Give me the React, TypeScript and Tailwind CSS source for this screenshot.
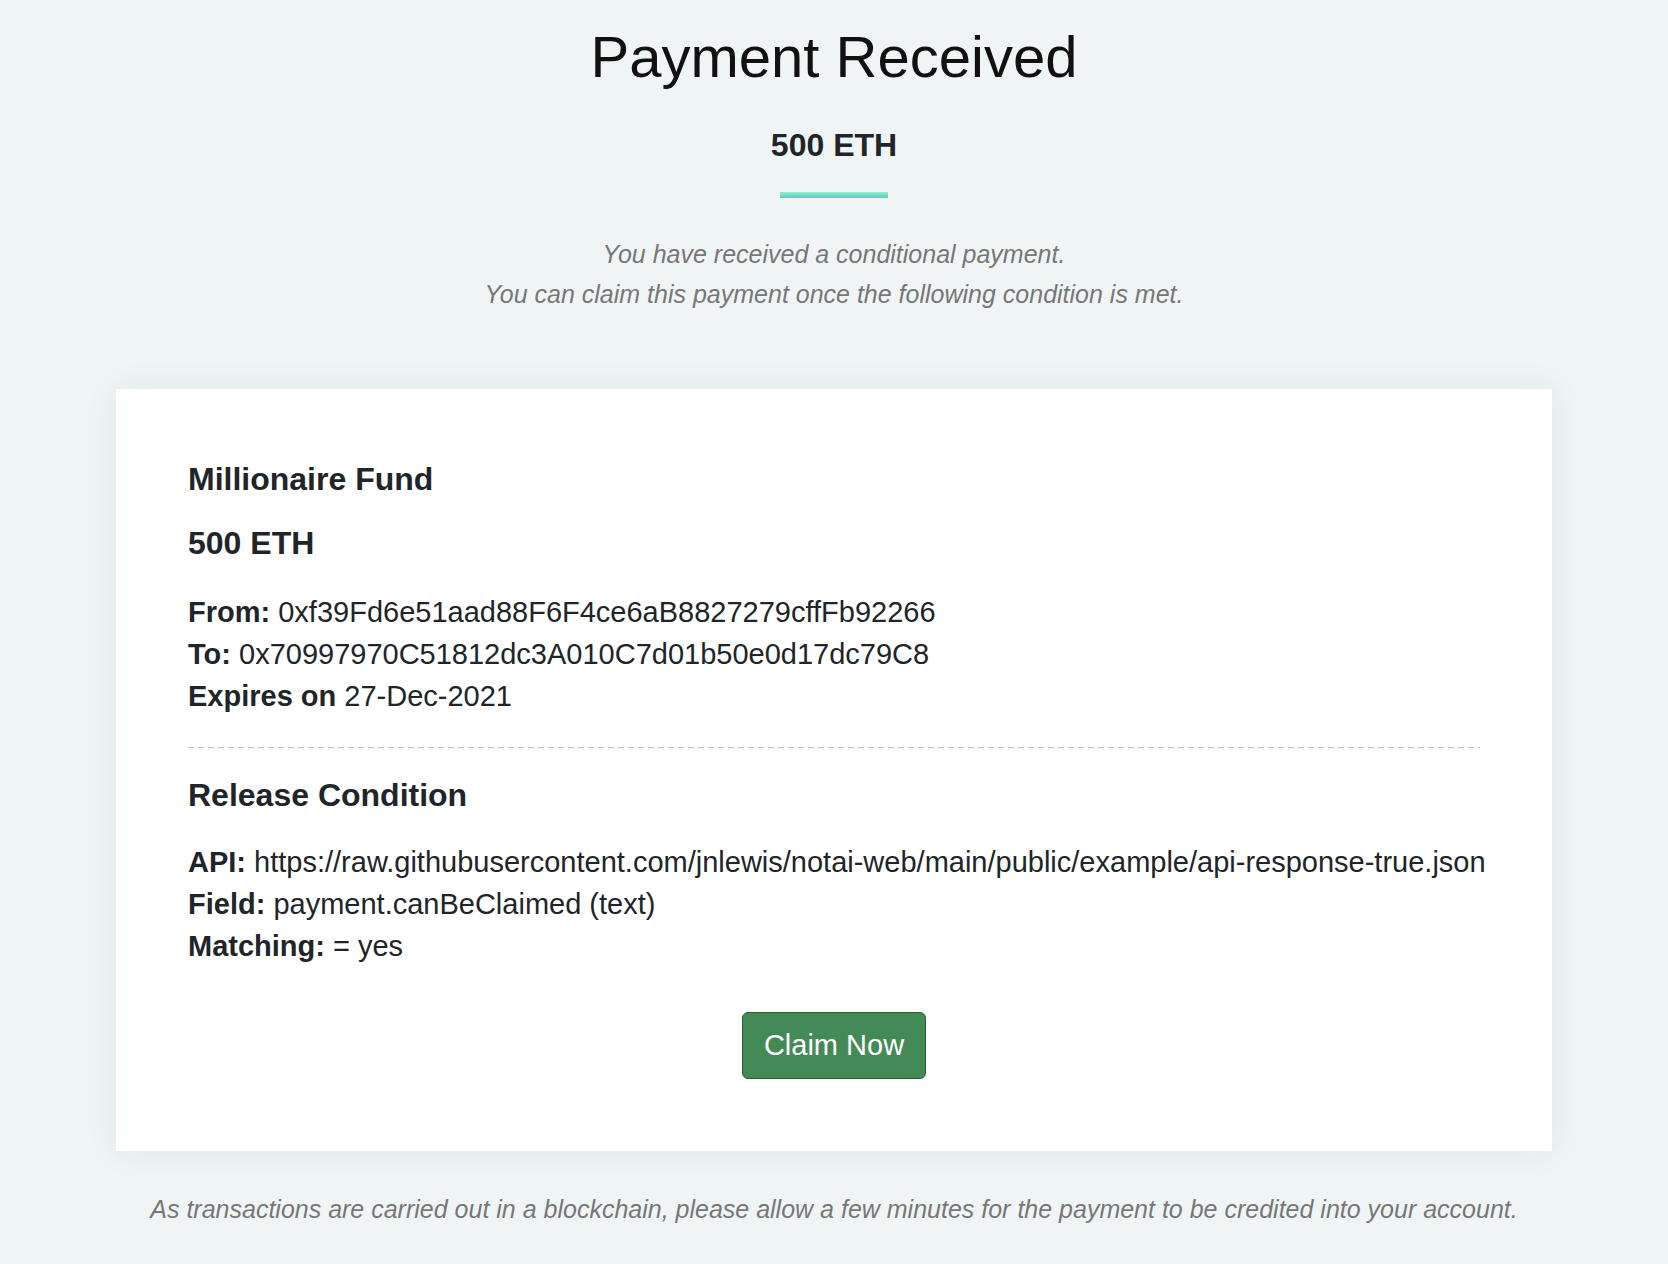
const font = { fontFamily: '"Liberation Sans", Arial, sans-serif' };

const Field = ({ label, value }: { label: string; value: string }) => (
  <div className="whitespace-nowrap">
    <span className="font-bold">{label}</span> {value}
  </div>
);

export default function App() {
  return (
    <div className="min-h-screen bg-[#eff5f5] text-[#212529]" style={font}>
      <div className="pt-[22px] flex flex-col items-center">
        <h1 className="text-[58px] leading-[70px] text-[#111]">Payment Received</h1>
        <div className="mt-[33px] text-[32px] leading-[40px] font-bold">500 ETH</div>
        <div className="mt-[27px] h-[6px] w-[108px] bg-linear-to-b from-[#8ff0c9] to-[#5bcbc5]" />
        <div className="mt-[36px] text-center italic text-[25px] leading-[40px] text-[#777]">
          <p>You have received a conditional payment.</p>
          <p>You can claim this payment once the following condition is met.</p>
        </div>
      </div>

      <div className="mx-[116px] mt-[75px] bg-white px-[72px] pt-[70px] pb-[72px] shadow-[0_0_32px_rgba(0,40,40,0.07)]">
        <h2 className="text-[32px] leading-[40px] font-bold">Millionaire Fund</h2>
        <h3 className="mt-[24px] text-[32px] leading-[40px] font-bold">500 ETH</h3>
        <div className="mt-[28px] text-[29px] leading-[42px]">
          <Field label="From:" value="0xf39Fd6e51aad88F6F4ce6aB8827279cffFb92266" />
          <Field label="To:" value="0x70997970C51812dc3A010C7d01b50e0d17dc79C8" />
          <Field label="Expires on" value="27-Dec-2021" />
        </div>
        <div className="mt-[30px] h-px bg-[repeating-linear-gradient(90deg,#c2c2c2_0_6px,transparent_6px_10px)]" />
        <h3 className="mt-[27px] text-[32px] leading-[40px] font-bold">Release Condition</h3>
        <div className="mt-[26px] text-[29px] leading-[42px]">
          <Field
            label="API:"
            value="https://raw.githubusercontent.com/jnlewis/notai-web/main/public/example/api-response-true.json"
          />
          <Field label="Field:" value="payment.canBeClaimed (text)" />
          <Field label="Matching:" value="= yes" />
        </div>
        <div className="mt-[45px] flex justify-center">
          <button className="h-[67px] px-[21px] rounded-[6px] border-[1.5px] border-[#2b5b32] bg-[#438a57] text-white text-[29px]">
            Claim Now
          </button>
        </div>
      </div>

      <p className="mt-[38px] text-center italic text-[25px] leading-[40px] text-[#777]">
        As transactions are carried out in a blockchain, please allow a few minutes for the payment to be credited into your account.
      </p>

      <div className="mx-[116px] mt-[60px] h-[200px] bg-white shadow-[0_0_32px_rgba(0,40,40,0.07)]" />
    </div>
  );
}
